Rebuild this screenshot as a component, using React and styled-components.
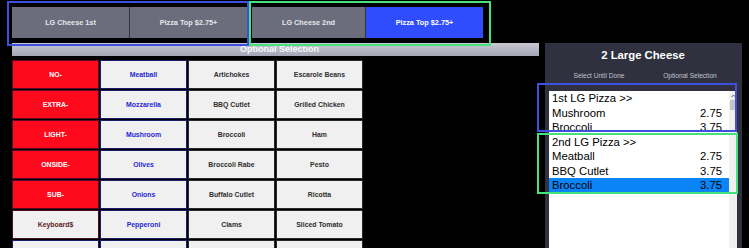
import React from "react";
import styled, { createGlobalStyle } from "styled-components";

const Global = createGlobalStyle`
  html, body { margin: 0; padding: 0; background: #000; }
  body { font-family: "Liberation Sans", Arial, sans-serif; }
  * { box-sizing: border-box; }
`;

const Page = styled.div`
  position: relative;
  width: 749px;
  height: 248px;
  overflow: hidden;
  background: #000;
  display: flex;
  align-items: flex-start;
`;

const Left = styled.div`
  width: 540px;
  padding: 7px 0 0 12px;
  display: flex;
  flex-direction: column;
`;

const Toolbar = styled.div`
  display: flex;
  gap: 5px;
  height: 31px;
`;

const Group = styled.div`
  display: flex;
  height: 100%;
`;

const TopButton = styled.div`
  width: ${(p) => p.$w}px;
  height: 100%;
  display: flex;
  align-items: center;
  justify-content: center;
  background: ${(p) => (p.$active ? "#2f4dfc" : "#6b6d7c")};
  color: ${(p) => (p.$active ? "#ffffff" : "#e6e7ee")};
  font-weight: bold;
  font-size: 7.3px;
  border-left: ${(p) => (p.$divider ? "1px solid #34353f" : "none")};
`;

const SectionBar = styled.div`
  margin-top: 5px;
  width: 527px;
  height: 13px;
  background: linear-gradient(#c6c7d2, #a6a7b6);
  color: #f6f6fa;
  font-weight: bold;
  font-size: 9px;
  line-height: 13px;
  text-align: center;
  padding-left: 8px;
  overflow: hidden;
`;

const Grid = styled.div`
  margin-top: 4px;
  display: grid;
  grid-template-columns: repeat(4, 87px);
  grid-auto-rows: 29px;
  gap: 1px;
`;

const cellStyles = {
  mod: { bg: "#ff0a1c", fg: "#ffffff", bd: "#5a0a24" },
  key: { bg: "#f0f0f0", fg: "#5c2424", bd: "#4a1020" },
  blue: { bg: "#f0f0f0", fg: "#2828d4", bd: "#1c1c6c" },
  plain: { bg: "#f0f0f0", fg: "#2e2e2e", bd: "#2a2a2a" },
};

const Cell = styled.div`
  display: flex;
  align-items: center;
  justify-content: center;
  background: ${(p) => cellStyles[p.$kind].bg};
  color: ${(p) => cellStyles[p.$kind].fg};
  border: 1px solid ${(p) => cellStyles[p.$kind].bd};
  font-weight: bold;
  font-size: 6.9px;
`;

const Panel = styled.div`
  margin-top: 43px;
  margin-left: 5px;
  width: 197px;
  height: 205px;
  background: #2f313e;
  padding: 0 5px 0 4px;
  display: flex;
  flex-direction: column;
`;

const Title = styled.div`
  padding-top: 5px;
  line-height: 14px;
  text-align: center;
  color: #ffffff;
  font-weight: bold;
  font-size: 11.3px;
`;

const SubHeads = styled.div`
  margin-top: 8px;
  display: grid;
  grid-template-columns: 1fr 1fr;
  line-height: 12px;
  font-size: 6.6px;
  color: #c2c3cc;
  text-align: center;
`;

const SubHead = styled.div`
  padding-left: ${(p) => (p.$shift || 0)}px;
`;

const ListBox = styled.div`
  margin-top: 9px;
  flex: 1;
  background: #ffffff;
  display: flex;
  overflow: hidden;
`;

const Rows = styled.div`
  flex: 1;
  display: flex;
  flex-direction: column;
`;

const Row = styled.div`
  height: 14.5px;
  display: flex;
  align-items: center;
  justify-content: space-between;
  padding: 0 7px 0 3px;
  font-size: 11.3px;
  color: #000;
  background: ${(p) => (p.$selected ? "#0a84f6" : "transparent")};
`;

const ScrollBar = styled.div`
  width: 8px;
  background: #f0f0f0;
  display: flex;
  flex-direction: column;
  align-items: center;
`;

const ScrollArrow = styled.div`
  height: 9px;
  width: 100%;
  display: flex;
  align-items: center;
  justify-content: center;
`;

const Thumb = styled.div`
  width: 7px;
  height: 10px;
  background: #c6c6c6;
`;

const Outline = styled.div`
  position: absolute;
  left: ${(p) => p.$x}px;
  top: ${(p) => p.$y}px;
  width: ${(p) => p.$w}px;
  height: ${(p) => p.$h}px;
  border: 2px solid ${(p) => (p.$green ? "#46e07c" : "#3d50de")};
  pointer-events: none;
`;

const gridRows = [
  [["mod", "NO-"], ["blue", "Meatball"], ["plain", "Artichokes"], ["plain", "Escarole Beans"]],
  [["mod", "EXTRA-"], ["blue", "Mozzarella"], ["plain", "BBQ Cutlet"], ["plain", "Grilled Chicken"]],
  [["mod", "LIGHT-"], ["blue", "Mushroom"], ["plain", "Broccoli"], ["plain", "Ham"]],
  [["mod", "ONSIDE-"], ["blue", "Olives"], ["plain", "Broccoli Rabe"], ["plain", "Pesto"]],
  [["mod", "SUB-"], ["blue", "Onions"], ["plain", "Buffalo Cutlet"], ["plain", "Ricotta"]],
  [["key", "Keyboard$"], ["blue", "Pepperoni"], ["plain", "Clams"], ["plain", "Sliced Tomato"]],
  [["blue", ""], ["blue", ""], ["plain", ""], ["plain", ""]],
];

const listRows = [
  ["1st LG Pizza >>", ""],
  ["Mushroom", "2.75"],
  ["Broccoli", "3.75"],
  ["2nd LG Pizza >>", ""],
  ["Meatball", "2.75"],
  ["BBQ Cutlet", "3.75"],
  ["Broccoli", "3.75", true],
];

export default function App() {
  return (
    <>
      <Global />
      <Page>
        <Left>
          <Toolbar>
            <Group>
              <TopButton $w={117}>LG Cheese 1st</TopButton>
              <TopButton $w={118} $divider>Pizza Top $2.75+</TopButton>
            </Group>
            <Group>
              <TopButton $w={113}>LG Cheese 2nd</TopButton>
              <TopButton $w={118} $divider $active>Pizza Top $2.75+</TopButton>
            </Group>
          </Toolbar>
          <SectionBar>Optional Selection</SectionBar>
          <Grid>
            {gridRows.flatMap((r, i) =>
              r.map(([kind, label], j) => (
                <Cell key={`${i}-${j}`} $kind={kind}>
                  {label}
                </Cell>
              ))
            )}
          </Grid>
        </Left>
        <Panel>
          <Title>2 Large Cheese</Title>
          <SubHeads>
            <SubHead $shift={6}>Select Until Done</SubHead>
            <SubHead>Optional Selection</SubHead>
          </SubHeads>
          <ListBox>
            <Rows>
              {listRows.map(([name, price, sel], i) => (
                <Row key={i} $selected={sel}>
                  <span>{name}</span>
                  <span>{price}</span>
                </Row>
              ))}
            </Rows>
            <ScrollBar>
              <ScrollArrow>
                <svg width="5" height="4" viewBox="0 0 5 4">
                  <path d="M0.5 3 L2.5 1 L4.5 3" fill="none" stroke="#606060" strokeWidth="1" />
                </svg>
              </ScrollArrow>
              <Thumb />
            </ScrollBar>
          </ListBox>
        </Panel>
        <Outline $x={7} $y={1} $w={242} $h={45} />
        <Outline $x={249} $y={1} $w={242} $h={45} $green />
        <Outline $x={537} $y={83} $w={200} $h={49} />
        <Outline $x={537} $y={133} $w={201} $h={61} $green />
      </Page>
    </>
  );
}
